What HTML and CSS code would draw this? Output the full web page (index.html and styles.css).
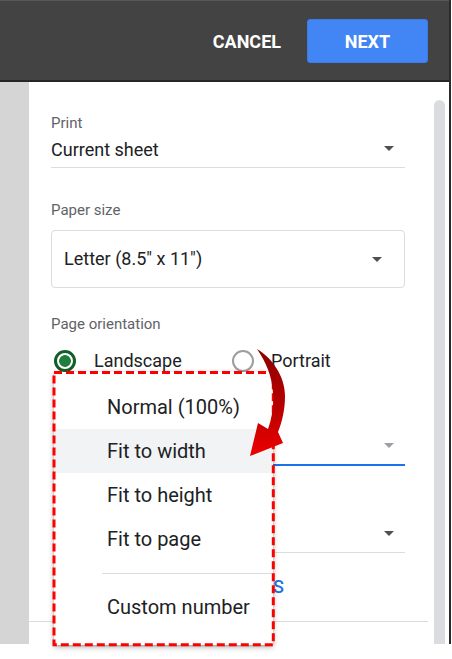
FILE: index.html
```html
<!DOCTYPE html>
<html>
<head>
<meta charset="utf-8">
<link rel="stylesheet" href="styles.css">
</head>
<body>
<div class="page">
  <div class="frame">
    <div class="header">
      <span class="cancel">CANCEL</span>
      <span class="next">NEXT</span>
    </div>
    <div class="main">
      <div class="gutter"></div>
      <div class="panel">
        <div class="form">
          <div class="fields">
            <div class="label">Print</div>
            <div class="select"><span>Current sheet</span><span class="caret"></span></div>

            <div class="label gap-lg">Paper size</div>
            <div class="box"><span>Letter (8.5" x 11")</span><span class="caret"></span></div>

            <div class="label gap-or">Page orientation</div>
            <div class="radios">
              <div class="opt opt-first"><span class="radio on"></span><span>Landscape</span></div>
              <div class="opt"><span class="radio"></span><span>Portrait</span></div>
            </div>

            <div class="label-spacer gap-scale"></div>
            <div class="select hidden-start focused"><span></span><span class="caret light"></span></div>

            <div class="label-spacer gap-lg"></div>
            <div class="select hidden-start"><span></span><span class="caret"></span></div>

            <div class="link">S</div>
          </div>
          <div class="rule"></div>
        </div>
        <div class="track"></div>
      </div>
    </div>
  </div>

  <div class="menu">
    <div class="item">Normal (100%)</div>
    <div class="item hover">Fit to width</div>
    <div class="item">Fit to height</div>
    <div class="item">Fit to page</div>
    <div class="divider"></div>
    <div class="item">Custom number</div>
  </div>

  <svg class="dashbox" width="230" height="282" viewBox="0 0 230 282">
    <rect x="4" y="4.5" width="219.3" height="272.2" fill="none" stroke="#ff0000" stroke-width="3" stroke-dasharray="8 4"/>
  </svg>

  <svg class="arrow" width="452" height="659" viewBox="0 0 452 659">
    <defs>
      <linearGradient id="ag" x1="0" y1="0" x2="0" y2="1">
        <stop offset="0" stop-color="#8e0000"/>
        <stop offset="0.55" stop-color="#b80000"/>
        <stop offset="1" stop-color="#ee0000"/>
      </linearGradient>
    </defs>
    <path d="M257,349 C272,358 285,376 285,396 C285,410 282,422 278,432 L283,443 L250,456 L258,423 L268,429 C272,418 274,405 273,393 C272,376 266,362 257,349 Z" fill="url(#ag)"/>
  </svg>
</div>
</body>
</html>
```

FILE: styles.css
```css
* { box-sizing: border-box; }
body { margin: 0; background: #fff; font-family: Roboto, "Noto Sans", Arial, sans-serif; color: #202124; }
.page { position: relative; width: 452px; height: 659px; overflow: hidden; }

.frame { width: 451px; height: 644px; border-right: 2px solid #2b2b2b; display: flex; flex-direction: column; }

.header { height: 82px; flex: none; background: #434343; border-top: 1px solid #575757; border-bottom: 2px solid #262626; display: flex; align-items: center; justify-content: flex-end; padding: 1px 21px 0 0; }
.cancel { color: #fff; font-weight: 700; font-size: 18px; margin-right: 26px; }
.next { width: 121px; height: 44px; background: #4285f4; border: 1px solid #3d7be6; border-radius: 3px; color: #fff; font-weight: 700; font-size: 18px; display: flex; align-items: center; justify-content: center; }

.main { flex: 1; display: flex; min-height: 0; }
.gutter { width: 29px; background: #d5d5d5; flex: none; }
.panel { flex: 1; background: #fff; display: flex; }
.form { width: 399px; flex: none; padding-top: 31px; }
.fields { padding-left: 22px; width: 376px; }
.track { width: 11px; margin-left: 6px; margin-top: 18px; background: #dadce0; border-radius: 6px 6px 0 0; }

.label { font-size: 15px; line-height: 20px; color: #5f6368; }
.label-spacer { height: 20px; }
.gap-lg { margin-top: 32px; }
.gap-or { margin-top: 26px; }
.gap-scale { margin-top: 37px; }

.select { margin-top: 5px; height: 30px; line-height: 24px; font-size: 18px; padding-bottom: 5px; border-bottom: 1px solid #dadce0; display: flex; justify-content: space-between; align-items: flex-start; }
.select .caret { margin-top: 8px; }
.select.focused { border-bottom: 2px solid #1a73e8; height: 31px; }
.select.hidden-start { margin-left: 12px; }

.caret { width: 0; height: 0; border-left: 5px solid transparent; border-right: 5px solid transparent; border-top: 5px solid #4d5156; margin-right: 11px; }
.caret.light { border-top-color: #9aa0a6; }

.box { margin-top: 10px; height: 58px; border: 1px solid #dadce0; border-radius: 4px; padding: 0 22px 0 12px; display: flex; align-items: center; justify-content: space-between; font-size: 18px; line-height: 24px; }
.box .caret { margin-right: 0; }

.radios { margin-top: 15px; height: 24px; display: flex; align-items: center; font-size: 18px; line-height: 24px; }
.opt { display: flex; align-items: center; }
.opt-first { width: 178px; }
.radio { width: 22px; height: 22px; border-radius: 50%; border: 2px solid #9e9e9e; margin-left: 3px; margin-right: 18px; flex: none; }
.opt + .opt .radio { margin-right: 17px; }
.radio.on { border: 3px solid #0f5f2a; background: radial-gradient(circle, #1e7e3a 0 5.5px, #fff 6.2px); }

.link { margin-top: 22px; width: 233px; text-align: right; white-space: nowrap; font-size: 18px; line-height: 24px; font-weight: 500; color: #1a73e8; }
.rule { margin-top: 22px; height: 1px; background: #dadce0; }

.menu { position: absolute; left: 54px; top: 372px; width: 219px; height: 273px; background: #fff; box-shadow: 0 2px 6px rgba(0,0,0,0.3), 0 1px 2px rgba(0,0,0,0.2); padding-top: 13px; }
.item { height: 44px; line-height: 44px; padding-left: 53px; font-size: 20px; color: #202124; white-space: nowrap; }
.item.hover { background: #f1f3f4; }
.divider { height: 24px; position: relative; }
.divider::after { content: ""; position: absolute; left: 48px; right: 0; top: 12px; height: 1px; background: #dadce0; }

.dashbox { position: absolute; left: 50px; top: 368px; }
.arrow { position: absolute; left: 0; top: 0; pointer-events: none; }
```
